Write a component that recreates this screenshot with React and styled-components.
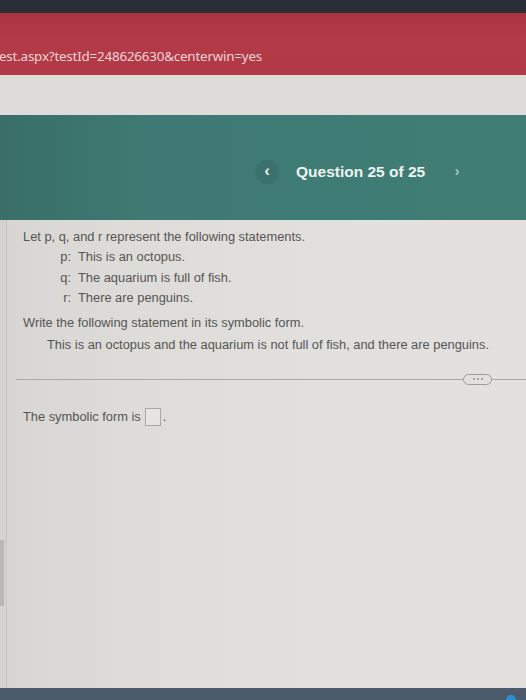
import React from "react";
import styled, { createGlobalStyle } from "styled-components";

const Global = createGlobalStyle`
  html, body { margin: 0; padding: 0; }
  body {
    width: 526px;
    height: 700px;
    overflow: hidden;
    background: #dcdbd7;
    font-family: "Liberation Sans", Arial, sans-serif;
  }
`;

const Page = styled.div`
  display: flex;
  flex-direction: column;
  width: 526px;
  height: 700px;
`;

const TopDark = styled.div`
  height: 13px;
  background: #2b2e37;
  flex-shrink: 0;
`;

const UrlBar = styled.div`
  height: 62px;
  background: linear-gradient(180deg, #a9343f 0%, #b23b47 40%, #b13a46 100%);
  display: flex;
  align-items: flex-end;
  padding-bottom: 10px;
  box-sizing: border-box;
  flex-shrink: 0;
  overflow: hidden;
`;

const Url = styled.span`
  font-family: "Noto Sans", "Open Sans", sans-serif;
  font-size: 13.4px;
  letter-spacing: -0.2px;
  color: #f1d3d6;
  margin-left: -1px;
  white-space: nowrap;
`;

const GrayBand = styled.div`
  height: 40px;
  background: #dddcd9;
  flex-shrink: 0;
`;

const Header = styled.div`
  height: 105px;
  background: linear-gradient(90deg, #3a6f69 0%, #3e7a73 30%, #3f7d75 100%);
  display: flex;
  align-items: center;
  padding-left: 255px;
  padding-top: 8px;
  box-sizing: border-box;
  flex-shrink: 0;
`;

const NavButton = styled.div`
  width: 24px;
  height: 24px;
  border-radius: 50%;
  background: ${(p) => (p.$active ? "#3b726c" : "transparent")};
  display: flex;
  align-items: center;
  justify-content: center;
  color: ${(p) => (p.$active ? "#e6ecea" : "#a9c6c1")};
  font-family: "Liberation Sans", Arial, sans-serif;
  font-size: ${(p) => (p.$active ? 17 : 14)}px;
  font-weight: bold;
  line-height: 1;
  padding-bottom: 2px;
  box-sizing: border-box;
`;

const Title = styled.div`
  color: #eef2f0;
  font-family: "Liberation Sans", Arial, sans-serif;
  font-weight: bold;
  font-size: 15.5px;
  margin: 0 20px 0 17px;
`;

const Body = styled.div`
  flex: 1;
  display: flex;
  background: linear-gradient(90deg, #d7d6d2 0%, #dedcd8 25%, #e2e0dd 60%, #e3e0de 100%);
`;

const Rail = styled.div`
  width: 7px;
  border-right: 1px solid #c4c4bf;
  background: #d3d3cf;
  display: flex;
  flex-direction: column;
  padding-top: 320px;
  box-sizing: border-box;
  flex-shrink: 0;
`;

const Thumb = styled.div`
  width: 4px;
  height: 66px;
  background: #b9b9b4;
`;

const Content = styled.div`
  flex: 1;
  display: flex;
  flex-direction: column;
  padding-top: 7px;
  color: #555555;
  font-size: 12.85px;
`;

const Para = styled.div`
  padding-left: ${(p) => p.$indent || 16}px;
  line-height: 20px;
  margin-top: ${(p) => p.$mt || 0}px;
`;

const StatementRow = styled.div`
  display: flex;
  line-height: 20.5px;
  padding-left: 45px;
`;

const Label = styled.span`
  width: 26px;
  text-align: right;
  padding-right: 7px;
  box-sizing: border-box;
`;

const DividerRow = styled.div`
  display: flex;
  align-items: center;
  margin: 19px 0 0 9px;
`;

const Line = styled.div`
  height: 1px;
  background: #a9aaa6;
  flex: ${(p) => (p.$grow ? 1 : "none")};
  width: ${(p) => (p.$w ? `${p.$w}px` : "auto")};
`;

const Pill = styled.div`
  width: 27px;
  height: 9px;
  border: 1px solid #9d9e9a;
  border-radius: 6px;
  display: flex;
  align-items: center;
  justify-content: center;
  gap: 2px;
`;

const Dot = styled.span`
  width: 2px;
  height: 2px;
  border-radius: 50%;
  background: #8f908c;
`;

const AnswerRow = styled.div`
  display: flex;
  align-items: center;
  padding-left: 16px;
  margin-top: 23px;
`;

const AnswerBox = styled.span`
  display: inline-block;
  width: 14px;
  height: 16px;
  border: 1px solid #a8a9a5;
  background: #e6e5e2;
  margin: 0 2px 0 4px;
`;

const Footer = styled.div`
  height: 12px;
  background: #4b5b6b;
  display: flex;
  justify-content: flex-end;
  align-items: flex-end;
  padding-right: 10px;
  flex-shrink: 0;
`;

const BlueDot = styled.div`
  width: 10px;
  height: 5px;
  border-radius: 5px 5px 0 0;
  background: #2c8fd6;
`;

const statements = [
  ["p:", "This is an octopus."],
  ["q:", "The aquarium is full of fish."],
  ["r:", "There are penguins."],
];

export default function App() {
  return (
    <>
      <Global />
      <Page>
        <TopDark />
        <UrlBar>
          <Url>est.aspx?testId=248626630&amp;centerwin=yes</Url>
        </UrlBar>
        <GrayBand />
        <Header>
          <NavButton $active>‹</NavButton>
          <Title>Question 25 of 25</Title>
          <NavButton>›</NavButton>
        </Header>
        <Body>
          <Rail>
            <Thumb />
          </Rail>
          <Content>
            <Para>Let p, q, and r represent the following statements.</Para>
            {statements.map(([l, t]) => (
              <StatementRow key={l}>
                <Label>{l}</Label>
                <span>{t}</span>
              </StatementRow>
            ))}
            <Para $mt={4}>Write the following statement in its symbolic form.</Para>
            <Para $indent={40} $mt={2}>
              This is an octopus and the aquarium is not full of fish, and there are penguins.
            </Para>
            <DividerRow>
              <Line $grow />
              <Pill>
                <Dot />
                <Dot />
                <Dot />
              </Pill>
              <Line $w={34} />
            </DividerRow>
            <AnswerRow>
              The symbolic form is
              <AnswerBox />.
            </AnswerRow>
          </Content>
        </Body>
        <Footer>
          <BlueDot />
        </Footer>
      </Page>
    </>
  );
}
